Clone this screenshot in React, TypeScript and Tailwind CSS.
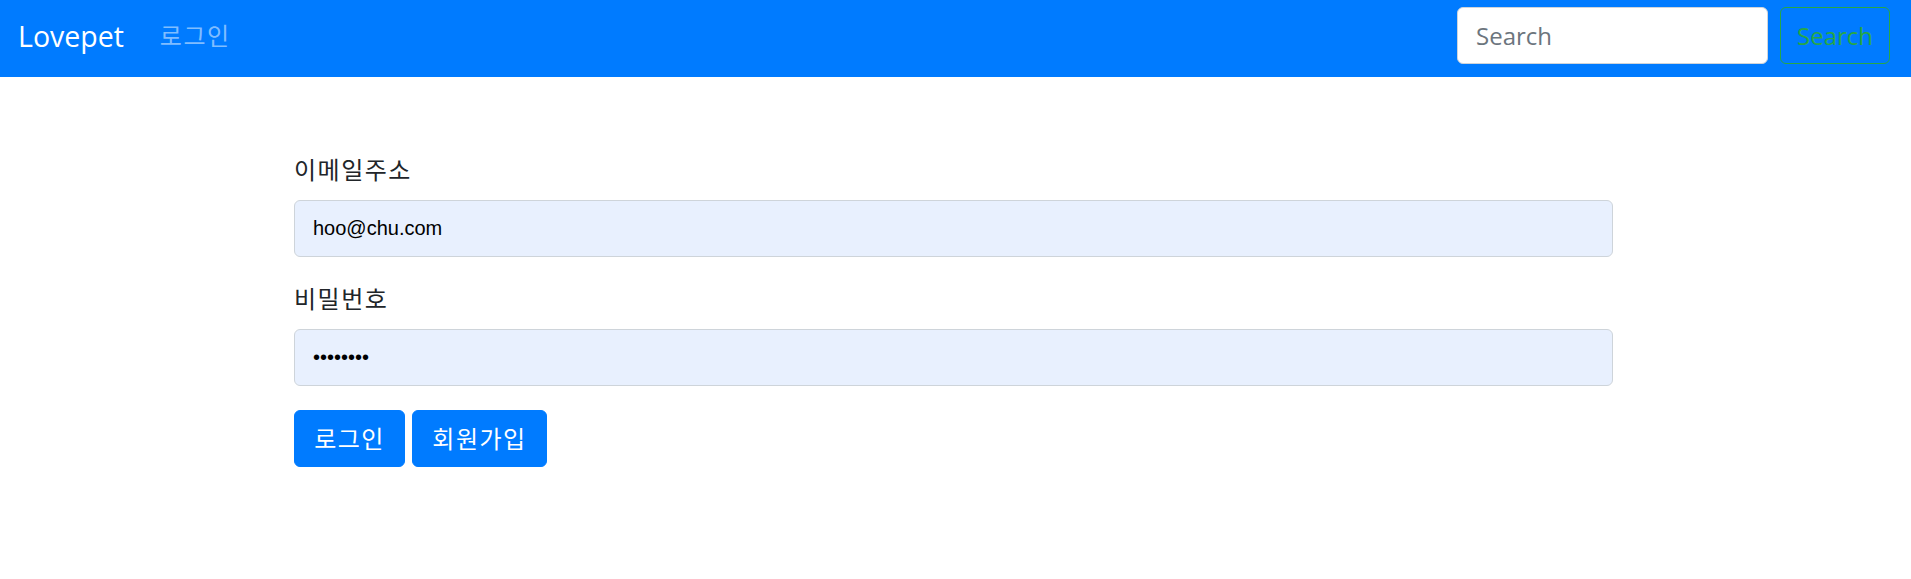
import React, { useState } from 'react';

export default function App() {
  const [email, setEmail] = useState('hoo@chu.com');
  const [password, setPassword] = useState('12345678');

  const kr = { fontFamily: '"Open Sans", "Noto Sans CJK KR", sans-serif' };

  return (
    <div className="min-h-[579px] bg-white" style={kr}>
      {/* 네비게이션 */}
      <nav className="h-[77px] bg-[#007bff] flex items-start justify-between pl-[18px] pr-[21px]">
        <div className="flex items-center h-[72px]">
          <a href="#" className="text-white text-[28.5px] leading-[45px] mr-[24px]">
            Lovepet
          </a>
          <a href="#" className="text-[#80bdff] text-[24px] leading-[36px] px-[12px] tracking-[1.5px]">
            로그인
          </a>
        </div>
        <form className="flex items-center gap-[12px] pt-[7px]" onSubmit={(e) => e.preventDefault()}>
          <input
            type="text"
            placeholder="Search"
            className="w-[311px] h-[57px] bg-white border-[1.5px] border-[#ced4da] rounded-[6px] px-[18px] text-[24px] text-[#495057] placeholder:text-[#6c757d] outline-none"
          />
          <button
            type="submit"
            className="w-[110px] h-[57px] border-[1.5px] border-[#28a745] rounded-[6px] text-[24px] text-[#28a745]"
          >
            Search
          </button>
        </form>
      </nav>

      {/* 로그인 폼 */}
      <div className="w-[1319px] ml-[294px] pt-[75px]">
        <form onSubmit={(e) => e.preventDefault()}>
          <div className="mb-[24px]">
            <label className="block text-[24px] leading-[36px] text-[#212529] mb-[12px] tracking-[1.5px]">
              이메일주소
            </label>
            <input
              type="email"
              value={email}
              onChange={(e) => setEmail(e.target.value)}
              className="w-full h-[57px] bg-[#e8f0fe] border-[1.5px] border-[#ced4da] rounded-[6px] px-[18px] text-[20px] text-black outline-none"
              style={{ fontFamily: '"Liberation Sans", Arial, sans-serif' }}
            />
          </div>
          <div className="mb-[24px]">
            <label className="block text-[24px] leading-[36px] text-[#212529] mb-[12px] tracking-[1.5px]">
              비밀번호
            </label>
            <input
              type="password"
              value={password}
              onChange={(e) => setPassword(e.target.value)}
              className="w-full h-[57px] bg-[#e8f0fe] border-[1.5px] border-[#ced4da] rounded-[6px] px-[18px] text-[20px] text-black outline-none"
              style={{ fontFamily: '"Liberation Sans", Arial, sans-serif' }}
            />
          </div>
          <div className="flex gap-[7px]">
            <button
              type="submit"
              className="w-[111px] h-[57px] bg-[#007bff] border-[1.5px] border-[#007bff] rounded-[6px] text-white text-[24px] tracking-[1.5px]"
            >
              로그인
            </button>
            <button
              type="button"
              className="w-[135px] h-[57px] bg-[#007bff] border-[1.5px] border-[#007bff] rounded-[6px] text-white text-[24px] tracking-[1.5px]"
            >
              회원가입
            </button>
          </div>
        </form>
      </div>
    </div>
  );
}
